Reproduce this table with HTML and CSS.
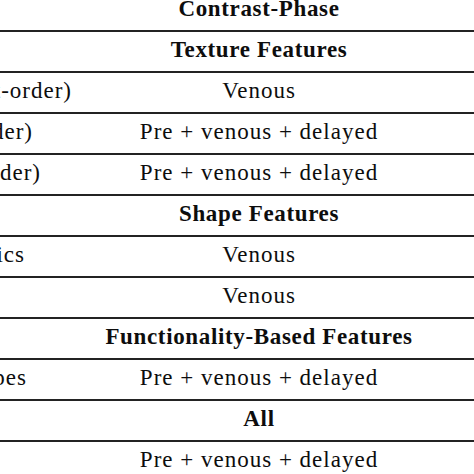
FILE: index.html
```html
<!DOCTYPE html>
<html lang="en">
<head>
<meta charset="utf-8">
<title>Contrast-Phase table</title>
<link rel="stylesheet" href="styles.css">
</head>
<body>
<table class="tbl">
  <colgroup>
    <col class="c1">
    <col class="c2">
    <col class="c3">
  </colgroup>
  <tbody>
    <tr class="head">
      <td></td>
      <td class="mid">Contrast-Phase</td>
      <td></td>
    </tr>
    <tr class="section">
      <td></td>
      <td class="mid">Texture Features</td>
      <td></td>
    </tr>
    <tr>
      <td><div class="lft p8">Intensity (first-order)</div></td>
      <td class="mid">Venous</td>
      <td></td>
    </tr>
    <tr>
      <td><div class="lft p47">GLCM (second-order)</div></td>
      <td class="mid">Pre + venous + delayed</td>
      <td></td>
    </tr>
    <tr>
      <td><div class="lft p39">GLRLM (higher-order)</div></td>
      <td class="mid">Pre + venous + delayed</td>
      <td></td>
    </tr>
    <tr class="section">
      <td></td>
      <td class="mid">Shape Features</td>
      <td></td>
    </tr>
    <tr>
      <td><div class="lft p55">Morphometrics</div></td>
      <td class="mid">Venous</td>
      <td></td>
    </tr>
    <tr>
      <td></td>
      <td class="mid">Venous</td>
      <td></td>
    </tr>
    <tr class="section">
      <td></td>
      <td class="mid">Functionality-Based Features</td>
      <td></td>
    </tr>
    <tr>
      <td><div class="lft p53">Enhancement types</div></td>
      <td class="mid">Pre + venous + delayed</td>
      <td></td>
    </tr>
    <tr class="section">
      <td></td>
      <td class="mid">All</td>
      <td></td>
    </tr>
    <tr>
      <td></td>
      <td class="mid">Pre + venous + delayed</td>
      <td></td>
    </tr>
  </tbody>
</table>
</body>
</html>
```

FILE: styles.css
```css
html, body {
  margin: 0;
  padding: 0;
  background: #ffffff;
  overflow: hidden;
}

.tbl {
  margin-top: -11px;
  width: 474px;
  table-layout: fixed;
  border-collapse: separate;
  border-spacing: 0;
  font-family: "Liberation Serif", "Times New Roman", serif;
  font-size: 23px;
  letter-spacing: 1px;
  color: #0d0d0d;
}

.c1 { width: 80px; }
.c2 { width: 358px; }
.c3 { width: 36px; }

.tbl td {
  border-top: 2px solid #232323;
  padding: 0 0 4px 0;
  height: 35px;
  line-height: 35px;
  white-space: nowrap;
  vertical-align: top;
  overflow: visible;
}

.mid {
  text-align: center;
}

.section .mid,
.head .mid {
  font-weight: bold;
  letter-spacing: 0.65px;
}

.lft {
  display: flex;
  justify-content: flex-end;
  white-space: nowrap;
}

.p8 { padding-right: 8px; }
.p39 { padding-right: 39px; }
.p47 { padding-right: 47px; }
.p53 { padding-right: 53px; }
.p55 { padding-right: 55px; }
```
